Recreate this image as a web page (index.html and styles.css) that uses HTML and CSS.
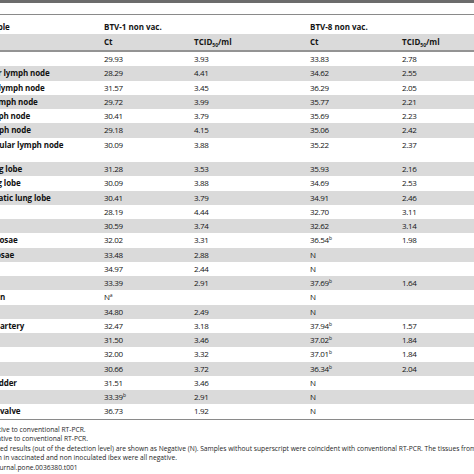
FILE: index.html
```html
<!DOCTYPE html>
<html>
<head>
<meta charset="utf-8">
<link rel="stylesheet" href="styles.css">
</head>
<body>
<div class="page">
  <div class="topbar"></div>
  <div class="toprule"></div>
  <div class="row head1">
    <div class="lab">Tissue sample</div>
    <div class="grp g1">BTV-1 non vac.</div>
    <div class="grp g8">BTV-8 non vac.</div>
  </div>
  <div class="row head2">
    <div class="lab"></div>
    <div>Ct</div>
    <div>TCID<sub>50</sub>/ml</div>
    <div>Ct</div>
    <div>TCID<sub>50</sub>/ml</div>
  </div>
  <div class="body">
    <div class="row"><div class="lab">Spleen</div><div>29.93</div><div>3.93</div><div>33.83</div><div>2.78</div></div>
    <div class="row"><div class="lab">Prescapular lymph node</div><div>28.29</div><div>4.41</div><div>34.62</div><div>2.55</div></div>
    <div class="row"><div class="lab">Pancreatic lymph node</div><div>31.57</div><div>3.45</div><div>36.29</div><div>2.05</div></div>
    <div class="row"><div class="lab">Popliteal lymph node</div><div>29.72</div><div>3.99</div><div>35.77</div><div>2.21</div></div>
    <div class="row"><div class="lab">Caudal lymph node</div><div>30.41</div><div>3.79</div><div>35.69</div><div>2.23</div></div>
    <div class="row"><div class="lab">Gastric lymph node</div><div>29.18</div><div>4.15</div><div>35.06</div><div>2.42</div></div>
    <div class="row tall"><div class="lab">Submandibular lymph node</div><div>30.09</div><div>3.88</div><div>35.22</div><div>2.37</div></div>
    <div class="row"><div class="lab">Cardiac lung lobe</div><div>31.28</div><div>3.53</div><div>35.93</div><div>2.16</div></div>
    <div class="row"><div class="lab">Cranial lung lobe</div><div>30.09</div><div>3.88</div><div>34.69</div><div>2.53</div></div>
    <div class="row"><div class="lab">Diaphragmatic lung lobe</div><div>30.41</div><div>3.79</div><div>34.91</div><div>2.46</div></div>
    <div class="row"><div class="lab">Liver</div><div>28.19</div><div>4.44</div><div>32.70</div><div>3.11</div></div>
    <div class="row"><div class="lab">Kidney</div><div>30.59</div><div>3.74</div><div>32.62</div><div>3.14</div></div>
    <div class="row"><div class="lab">Buccal mucosae</div><div>32.02</div><div>3.31</div><div>36.54<sup>b</sup></div><div>1.98</div></div>
    <div class="row"><div class="lab">Nasal mucosae</div><div>33.48</div><div>2.88</div><div>N</div><div></div></div>
    <div class="row"><div class="lab">Heart</div><div>34.97</div><div>2.44</div><div>N</div><div></div></div>
    <div class="row"><div class="lab">Brain</div><div>33.39</div><div>2.91</div><div>37.69<sup>b</sup></div><div>1.64</div></div>
    <div class="row"><div class="lab">Inguinal skin</div><div>N<sup>a</sup></div><div></div><div>N</div><div></div></div>
    <div class="row"><div class="lab">Ovary</div><div>34.80</div><div>2.49</div><div>N</div><div></div></div>
    <div class="row"><div class="lab">Pulmonary artery</div><div>32.47</div><div>3.18</div><div>37.94<sup>b</sup></div><div>1.57</div></div>
    <div class="row"><div class="lab">Aorta</div><div>31.50</div><div>3.46</div><div>37.02<sup>b</sup></div><div>1.84</div></div>
    <div class="row"><div class="lab">Tonsil</div><div>32.00</div><div>3.32</div><div>37.01<sup>b</sup></div><div>1.84</div></div>
    <div class="row"><div class="lab">Thymus</div><div>30.66</div><div>3.72</div><div>36.34<sup>b</sup></div><div>2.04</div></div>
    <div class="row"><div class="lab">Urinary bladder</div><div>31.51</div><div>3.46</div><div>N</div><div></div></div>
    <div class="row"><div class="lab">Uterus</div><div>33.39<sup>b</sup></div><div>2.91</div><div>N</div><div></div></div>
    <div class="row"><div class="lab">Pulmonary valve</div><div>36.73</div><div>1.92</div><div>N</div><div></div></div>
  </div>
  <div class="notes">
    <div><sup>a</sup>Samples positive to conventional RT-PCR.</div>
    <div><sup>b</sup>Samples negative to conventional RT-PCR.</div>
    <div>The not detected results (out of the detection level) are shown as Negative (N). Samples without superscript were coincident with conventional RT-PCR. The tissues from</div>
    <div>samples, taken in vaccinated and non inoculated ibex were all negative.</div>
    <div>doi:10.1371/journal.pone.0036380.t001</div>
  </div>
</div>
</body>
</html>
```

FILE: styles.css
```css
html, body {
  margin: 0;
  padding: 0;
  background: #ffffff;
  overflow: hidden;
}
body {
  width: 474px;
  height: 474px;
}
.page {
  margin-left: -45px;
  width: 560px;
  font-family: "Open Sans", "Noto Sans", sans-serif;
  font-size: 8px;
  color: #141414;
}
.topbar {
  height: 3px;
  background: #6c6c6c;
}
.toprule {
  margin-top: 11px;
  height: 1px;
  background: #8a8a8a;
}
.row {
  display: grid;
  grid-template-columns: 149px 90px 116px 92px 113px;
  height: 14.25px;
  align-items: center;
  line-height: 10px;
  white-space: nowrap;
  letter-spacing: -0.3px;
}
.lab {
  font-weight: 700;
  color: #111111;
  letter-spacing: -0.1px;
}
.head1 {
  grid-template-columns: 149px 206px 205px;
  height: 19px;
  align-items: end;
  font-weight: 700;
  letter-spacing: 0;
}
.head1 > div {
  padding-bottom: 2px;
}
.grp.g1 {
  margin-right: 2px;
}
.head2 {
  height: 16px;
  background: #dadada;
  border-bottom: 2px solid #939393;
  font-weight: 700;
  letter-spacing: 0;
}
.body {
  border-bottom: 1.5px solid #8a8a8a;
}
.body .row:nth-child(even) {
  background: #dadada;
}
.row.tall {
  height: 24.5px;
  align-items: start;
  padding-top: 2px;
  box-sizing: border-box;
}
sub {
  font-size: 5px;
  vertical-align: -1.5px;
  line-height: 0;
}
sup {
  font-size: 5px;
  vertical-align: 3px;
  line-height: 0;
}
.notes {
  margin-top: 5.5px;
  font-size: 6.7px;
  line-height: 9.4px;
  white-space: nowrap;
  color: #1e1e1e;
}
.notes sup {
  font-size: 4.5px;
}
```
